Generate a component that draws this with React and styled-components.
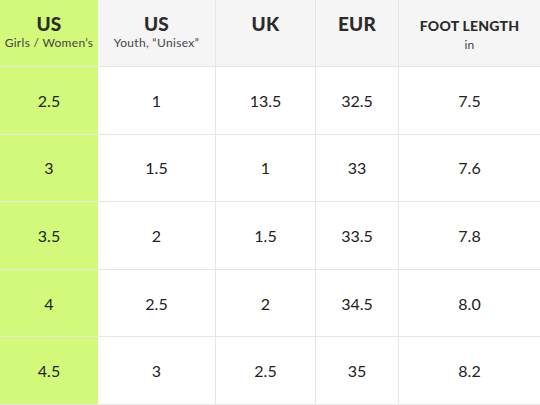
import React from 'react';
import styled, { createGlobalStyle } from 'styled-components';

const GlobalStyle = createGlobalStyle`
  html, body {
    margin: 0;
    padding: 0;
    background: #ffffff;
  }
  body {
    font-family: Lato, "Open Sans", sans-serif;
  }
`;

const Table = styled.div`
  display: grid;
  grid-template-columns: 98px 118px 100px 83px 141px;
  grid-template-rows: 67px repeat(5, 67.6px);
  width: 540px;
  height: 405px;
  overflow: hidden;
`;

const HeadCell = styled.div`
  display: flex;
  flex-direction: column;
  align-items: center;
  justify-content: flex-start;
  padding-top: 13px;
  box-sizing: border-box;
  background: ${(p) => (p.$accent ? '#d3f97b' : '#f5f5f5')};
  border-right: ${(p) => (p.$accent || p.$last ? 'none' : '1px solid #e6e6e6')};
  border-bottom: 1px solid #e6e6e6;
`;

const HeadTitle = styled.div`
  font-weight: 900;
  font-size: ${(p) => (p.$small ? '14px' : '19px')};
  line-height: 22px;
  margin-top: ${(p) => (p.$small ? '2px' : '0')};
  color: #2b2b2b;
  letter-spacing: 0.2px;
`;

const HeadSub = styled.div`
  font-size: 12px;
  line-height: 16px;
  margin-top: 0;
  color: #444;
  letter-spacing: 0.3px;
`;

const Cell = styled.div`
  display: flex;
  align-items: center;
  justify-content: center;
  box-sizing: border-box;
  font-size: 16px;
  color: #222;
  background: ${(p) => (p.$accent ? '#d3f97b' : '#ffffff')};
  border-right: ${(p) => (p.$accent || p.$last ? 'none' : '1px solid #e6e6e6')};
  border-bottom: 1px solid #e6e6e6;
`;

const rows = [
  ['2.5', '1', '13.5', '32.5', '7.5'],
  ['3', '1.5', '1', '33', '7.6'],
  ['3.5', '2', '1.5', '33.5', '7.8'],
  ['4', '2.5', '2', '34.5', '8.0'],
  ['4.5', '3', '2.5', '35', '8.2'],
];

export default function App() {
  return (
    <>
      <GlobalStyle />
      <Table>
        <HeadCell $accent>
          <HeadTitle>US</HeadTitle>
          <HeadSub>Girls / Women’s</HeadSub>
        </HeadCell>
        <HeadCell>
          <HeadTitle>US</HeadTitle>
          <HeadSub>Youth, “Unisex”</HeadSub>
        </HeadCell>
        <HeadCell>
          <HeadTitle>UK</HeadTitle>
        </HeadCell>
        <HeadCell>
          <HeadTitle>EUR</HeadTitle>
        </HeadCell>
        <HeadCell $last>
          <HeadTitle $small>FOOT LENGTH</HeadTitle>
          <HeadSub>in</HeadSub>
        </HeadCell>
        {rows.map((r, i) =>
          r.map((v, j) => (
            <Cell key={`${i}-${j}`} $accent={j === 0} $last={j === 4}>
              {v}
            </Cell>
          ))
        )}
      </Table>
    </>
  );
}
